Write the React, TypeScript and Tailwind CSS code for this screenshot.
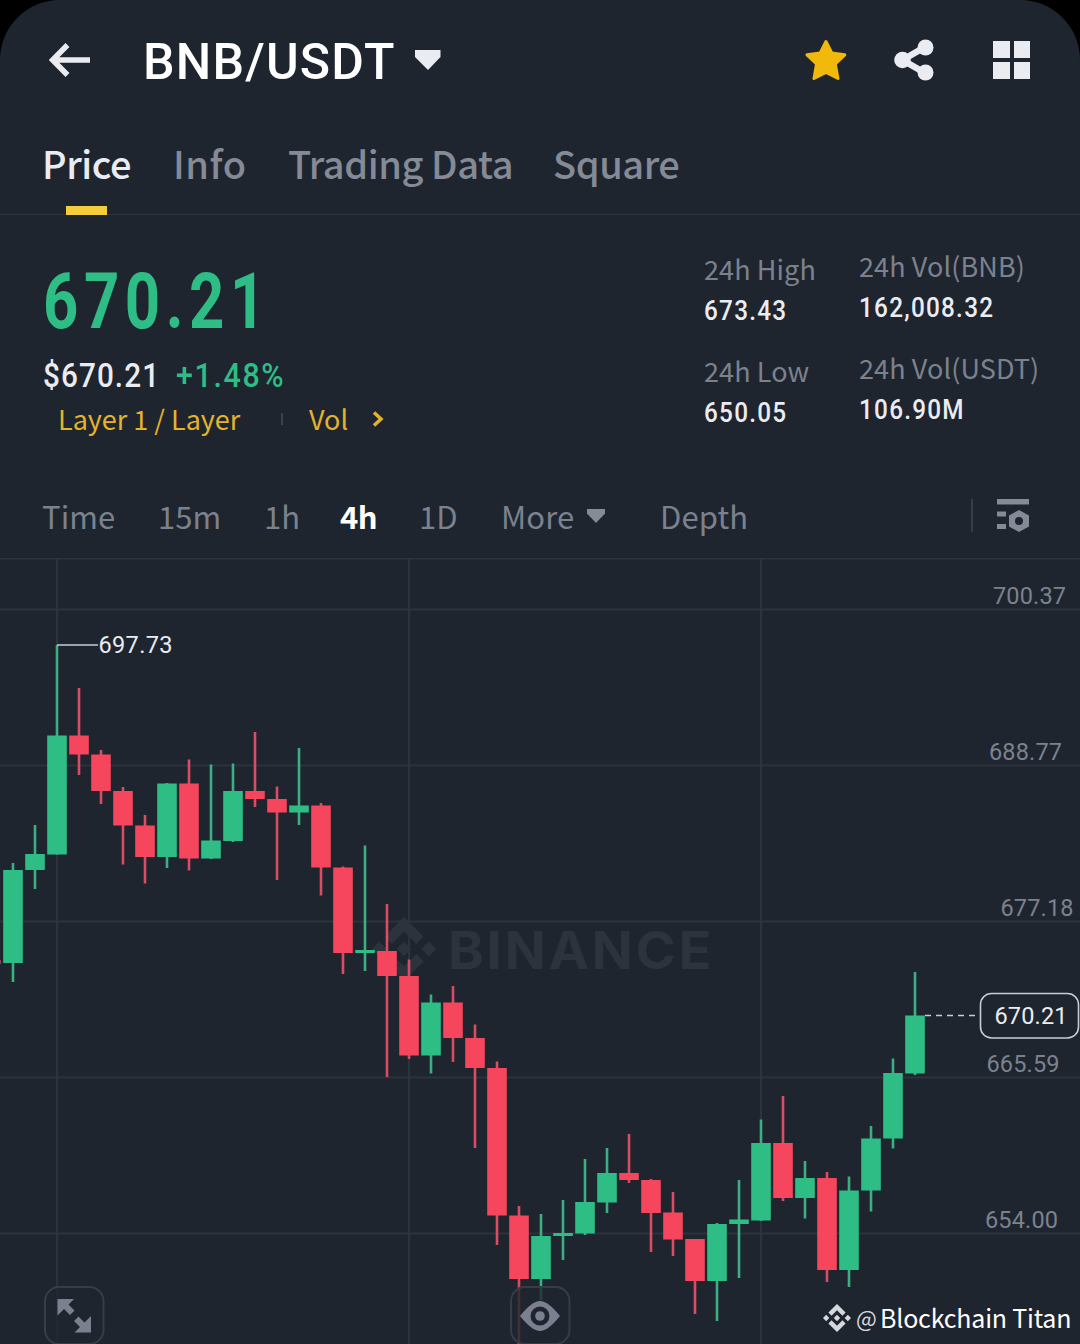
import { FC } from "react";

type Candle = [up: number, high: number, top: number, bottom: number, low: number];

// direction, high, body top, body bottom, low (chart pixels)
const candles: Candle[] = [
  [1, 863, 870, 963, 982],
  [1, 825, 854, 870, 889],
  [1, 645, 735.5, 854.5, 854.5],
  [0, 688, 735.5, 754.5, 775],
  [0, 750, 754.5, 791, 804],
  [0, 787, 791, 825.5, 864.5],
  [0, 815, 825.5, 857, 883.5],
  [1, 783, 783.5, 857, 868],
  [0, 759.5, 783.5, 858.5, 870.5],
  [1, 764.5, 840.5, 858.5, 859],
  [1, 763.5, 791, 841, 842],
  [0, 732, 791, 799, 807],
  [0, 786.5, 799, 812.5, 880],
  [1, 748, 805.5, 812.5, 825],
  [0, 803, 805.5, 867.5, 895.5],
  [0, 866.5, 867.5, 953, 974],
  [1, 845.5, 950, 953, 971],
  [0, 904, 951, 976, 1077],
  [0, 959.5, 976, 1055.5, 1059],
  [1, 994.5, 1002.5, 1055.5, 1073.5],
  [0, 986, 1002.5, 1038, 1062],
  [0, 1024.5, 1038, 1068, 1148],
  [0, 1061.5, 1068, 1215.5, 1245],
  [0, 1206, 1215.5, 1279, 1344],
  [1, 1214, 1236, 1279, 1300],
  [1, 1200, 1233, 1236, 1260],
  [1, 1159, 1202, 1233.5, 1235],
  [1, 1148, 1173, 1202.5, 1213],
  [0, 1134, 1173, 1180, 1183],
  [0, 1179, 1180, 1213, 1252],
  [0, 1192, 1212.5, 1239.5, 1256],
  [0, 1239, 1239, 1281, 1314],
  [1, 1223, 1224, 1281, 1321],
  [1, 1180, 1219.5, 1224, 1278],
  [1, 1119.5, 1143, 1220.5, 1221],
  [0, 1096, 1143, 1198, 1201],
  [1, 1161, 1178, 1198, 1218.5],
  [0, 1172, 1178, 1270, 1282],
  [1, 1176.5, 1190.5, 1270, 1287],
  [1, 1126, 1138.5, 1190.5, 1211.5],
  [1, 1058.5, 1073, 1138.5, 1148.5],
  [1, 972, 1015.5, 1073.5, 1075],
];

const axis = [
  { label: "700.37", x: 993, y: 609.5 },
  { label: "688.77", x: 989, y: 765.5 },
  { label: "677.18", x: 1000.5, y: 921.5 },
  { label: "665.59", x: 986.5, y: 1077.5 },
  { label: "654.00", x: 985, y: 1233.5 },
];

const BinanceMark: FC<{ className?: string }> = ({ className }) => (
  <svg viewBox="0 0 126.61 126.61" className={className} fill="currentColor">
    <path d="M38.73 53.2l24.59-24.58 24.6 24.6 14.3-14.31L63.32 0 24.43 38.9zM0 63.31L14.3 49l14.31 14.31-14.31 14.3zM38.73 73.41l24.59 24.59 24.6-24.6 14.31 14.29-38.9 38.91-38.91-38.88zM98 63.31L112.3 49l14.31 14.3-14.31 14.32zM77.83 63.3L63.32 48.78 48.79 63.3l14.53 14.53z" />
  </svg>
);

const Header = () => (
  <header className="flex h-[120px] items-center px-[50px]">
    <svg className="-ml-px w-[41px] h-[34px]" viewBox="0 0 41 34" fill="none" stroke="#eaecf2" strokeWidth="5.6">
      <path d="M41 17H4M18.5 2L3.6 17l14.9 15" />
    </svg>
    <h1 className="ml-[53px] w-[252px] whitespace-nowrap pt-[3px] font-[Roboto] text-[50px] leading-[60px] font-medium tracking-[1.2px] text-white">
      BNB/USDT
    </h1>
    <svg className="ml-[20px] w-[26px] h-[20px]" viewBox="0 0 26 20" fill="#eaecf2">
      <path d="M0 0h25.500v7L13 20 0 7z" />
    </svg>
    <div className="ml-auto flex items-center">
      <svg className="w-[42px] h-[42px]" viewBox="0 0 42 42" fill="#f0b90b" stroke="#f0b90b" strokeWidth="3" strokeLinejoin="round">
        <path d="M21 2.500l5.800 11.500 13 1.800-9.500 9.200 2.700 14.500L21 33.500 9 39.500l2.500-14.500L2 15.800 15.200 14z" />
      </svg>
      <svg className="ml-[47px] w-[40px] h-[42px]" viewBox="0 0 40 42" fill="#eaecf2">
        <path d="M31 8L8.500 21 31 34" fill="none" stroke="#eaecf2" strokeWidth="6.500" />
        <circle cx="31.500" cy="8.500" r="8" />
        <circle cx="8.500" cy="21" r="8.300" />
        <circle cx="31.500" cy="33.500" r="8" />
      </svg>
      <div className="ml-[59px] grid grid-cols-2 gap-1">
        <span className="h-[17px] w-[16.5px] bg-[#eaecf2]" />
        <span className="h-[17px] w-[16.5px] bg-[#eaecf2]" />
        <span className="h-[17px] w-[16.5px] bg-[#eaecf2]" />
        <span className="h-[17px] w-[16.5px] bg-[#eaecf2]" />
      </div>
    </div>
  </header>
);

const Tabs = () => (
  <nav className="flex h-[95px] border-b border-[#2d343e] text-[38px] leading-[86px] font-medium tracking-[-0.45px] text-[#848a96] whitespace-nowrap">
    <div className="ml-[42px] flex w-[131px] flex-col">
      <span className="h-[86px] text-[#eaecf2]">Price</span>
      <span className="ml-[24px] h-[9px] w-[41px] shrink-0 bg-[#f3cd3c]" />
    </div>
    <span className="w-[115px] tracking-[0.5px]">Info</span>
    <span className="w-[265px]">Trading Data</span>
    <span>Square</span>
  </nav>
);

const Stat: FC<{ label: string; value: string }> = ({ label, value }) => (
  <div className="h-[102px] whitespace-nowrap">
    <div className="h-10 text-[27px] leading-9 tracking-[0.1px] text-[#7b828e]">{label}</div>
    <div className="origin-left scale-x-90 font-[Roboto] text-[27px] leading-10 font-medium tracking-[1.4px] text-[#eaecf2]">
      {value}
    </div>
  </div>
);

const Summary = () => (
  <section className="flex h-[263px]">
    <div className="w-[704px] pl-[43px] pt-[47px] whitespace-nowrap">
      <div className="h-[92px] origin-left scale-x-[0.79] font-[Roboto] text-[78px] leading-[80px] font-bold tracking-[7px] text-[#2ebd85]">
        670.21
      </div>
      <div className="flex h-[43px] items-center font-[Roboto] text-[33px] leading-[44px] font-medium">
        <span className="w-[133px] origin-left scale-x-90 tracking-[1.2px] text-[#eaecf2]">$670.21</span>
        <span className="origin-left scale-x-[0.92] tracking-[1.8px] text-[#2ebd85]">+1.48%</span>
      </div>
      <div className="flex h-[44px] items-center pl-[15px] text-[27px] leading-[44px] text-[#e3b32c]">
        <span className="w-[223px]">Layer 1 / Layer</span>
        <span className="h-3 w-[2px] bg-[#3a414c]" />
        <span className="ml-[26px] w-[63px]">Vol</span>
        <svg className="w-[12px] h-[16px]" viewBox="0 0 12 16" fill="none" stroke="#e3b32c" strokeWidth="3.500">
          <path d="M2 1.500L9 8l-7 6.500" />
        </svg>
      </div>
    </div>
    <div className="w-[155px] pt-[36px]">
      <Stat label="24h High" value="673.43" />
      <Stat label="24h Low" value="650.05" />
    </div>
    <div className="pt-[33px]">
      <Stat label="24h Vol(BNB)" value="162,008.32" />
      <Stat label="24h Vol(USDT)" value="106.90M" />
    </div>
  </section>
);

const Intervals = () => (
  <div className="flex h-[80px] items-center pb-[5px] pl-[42px] text-[31px] leading-[75px] tracking-[0.1px] text-[#7b828e] whitespace-nowrap">
    <span className="w-[116px]">Time</span>
    <span className="w-[106px]">15m</span>
    <span className="w-[76px]">1h</span>
    <span className="w-[79px] font-bold tracking-[-0.5px] text-white">4h</span>
    <span className="w-[82px]">1D</span>
    <span className="w-[86px]">More</span>
    <svg className="w-[18px] h-[14px]" viewBox="0 0 18 14" fill="#848a96">
      <path d="M0 0h18v4.500L9 14 0 4.500z" />
    </svg>
    <span className="ml-[55px]">Depth</span>
    <span className="ml-auto h-[33px] w-[2px] bg-[#363d48]" />
    <svg className="ml-[24px] mr-[51px] w-[32px] h-[33px]" viewBox="0 0 32 33" fill="#848a96">
      <path d="M0 0h32v5.500H0zM0 12.500h9v5H0zM0 25h9v5H0z" />
      <path fillRule="evenodd" d="M22 11l10 5.500v11L22 33l-10-5.500v-11zM22 18a4 4 0 1 0 0 8 4 4 0 0 0 0-8z" />
    </svg>
  </div>
);

const Chart = () => (
  <svg className="block" width="1080" height="786" viewBox="0 558 1080 786" fontFamily="Roboto, sans-serif">
    <g stroke="#2c333d" strokeWidth="2">
      <path d="M0 558.500H1080" />
      {axis.map((a) => (
        <path key={a.label} d={`M0 ${a.y}H1080`} />
      ))}
      <path d="M57 558V1344M409 558V1344M761 558V1344" />
    </g>
    <g fill="#7b828e" fontSize="23.500">
      {axis.map((a) => (
        <text key={a.label} x={a.x} y={a.y - 5.5} textLength="73">
          {a.label}
        </text>
      ))}
    </g>
    <g fill="#2c333d">
      <svg x="372" y="917" width="64" height="64" viewBox="0 0 126.61 126.61">
        <path d="M38.73 53.2l24.59-24.58 24.6 24.6 14.3-14.31L63.32 0 24.43 38.9zM0 63.31L14.3 49l14.31 14.31-14.31 14.3zM38.73 73.41l24.59 24.59 24.6-24.6 14.31 14.29-38.9 38.91-38.91-38.88zM98 63.31L112.3 49l14.31 14.3-14.31 14.32zM77.83 63.3L63.32 48.78 48.79 63.3l14.53 14.53z" />
      </svg>
      <text
        x="448"
        y="969"
        fontSize="52"
        fontWeight="700"
        fontFamily="Inter, sans-serif"
        letterSpacing="2.500"
        textLength="266"
        lengthAdjust="spacingAndGlyphs"
      >
        BINANCE
      </text>
    </g>
    <rect x="0" y="960" width="1" height="4" fill="#8d4553" />
    {candles.map(([up, high, top, bottom, low], i) => {
      const x = 13 + i * 22;
      return (
        <g key={i}>
          <rect x={x - 1.3} y={high} width="2.600" height={low - high} fill={up ? "#3dae83" : "#d94d64"} />
          <rect x={x - 9.8} y={top} width="19.600" height={bottom - top} fill={up ? "#2ebd85" : "#f6465d"} />
        </g>
      );
    })}
    <path d="M57 645H98" stroke="#c9ccd4" strokeWidth="1.500" />
    <text x="98.500" y="653" fill="#eaecf2" fontSize="23.500" textLength="74">
      697.73
    </text>
    <path d="M925 1015.500H980" stroke="#c9ccd4" strokeWidth="1.500" strokeDasharray="6 5" />
    <rect x="980.500" y="993.500" width="98" height="44.500" rx="11" fill="#1f252f" stroke="#c9ccd4" strokeWidth="1.600" />
    <text x="994.500" y="1024" fill="#eaecf2" fontSize="23.500" textLength="73">
      670.21
    </text>

    <g fill="#1f252f" fillOpacity="0.800" stroke="#363d48" strokeWidth="2">
      <rect x="45" y="1287" width="58.500" height="57" rx="14" />
      <rect x="511" y="1287" width="58.500" height="57" rx="14" />
    </g>
    <g fill="#7a8090">
      <path d="M57.500 1299h16.500l-5.500 5.500 6 6-4.500 4.500-6-6-6.500 6.500z" />
      <path d="M91 1332.500H74.500l5.500-5.500-6-6 4.500-4.500 6 6 6.500-6.500z" />
      <path fillRule="evenodd" d="M520 1316Q532 1301 540 1301T560 1316Q548 1331 540 1331T520 1316zM540 1306.500a9.500 9.500 0 1 0 0 19 9.500 9.500 0 0 0 0-19z" />
      <circle cx="540" cy="1316" r="4.800" />
    </g>
  </svg>
);

const App = () => (
  <div className="h-[1344px] w-[1080px] bg-black">
    <main className="relative flex h-full flex-col overflow-hidden rounded-t-[60px] bg-[#1f252f] font-['Noto_Sans_CJK_SC','Noto_Sans',sans-serif]">
      <Header />
      <Tabs />
      <Summary />
      <Intervals />
      <Chart />
      <div className="absolute left-[823px] top-[1300px] flex h-9 items-center whitespace-nowrap text-[25px] leading-9">
        <BinanceMark className="size-[28px] text-[#d5d8dd]" />
        <span className="mb-[3px] ml-[5px] w-[24px] text-[22px] text-[#d5d8dd]">@</span>
        <span className="mb-[3px] tracking-[-0.2px] text-white">Blockchain Titan</span>
      </div>
    </main>
  </div>
);

export default App;
